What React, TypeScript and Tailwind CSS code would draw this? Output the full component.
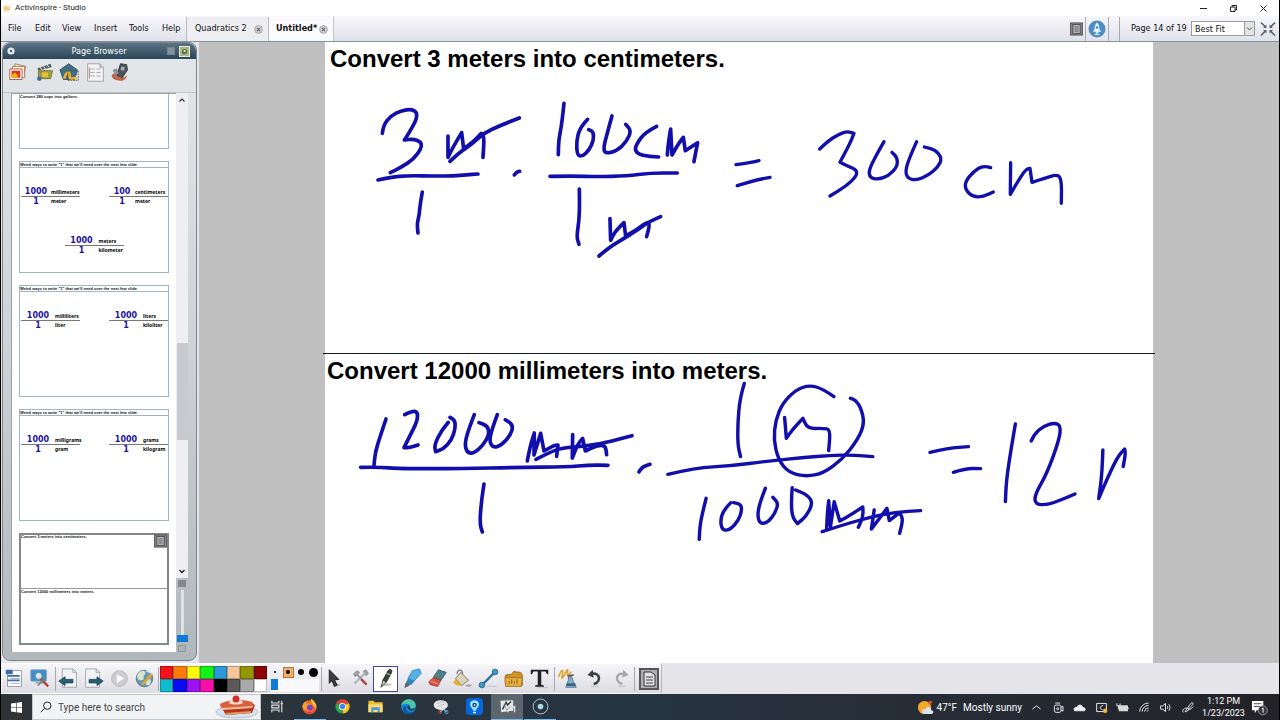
import type { ReactNode } from "react";
import clsx from "clsx";

const UI_FONT = "font-['DejaVu_Sans_Condensed','DejaVu_Sans',sans-serif]";

const MENUS = [
  { label: "File", width: "w-[27px]" },
  { label: "Edit", width: "w-[27px]" },
  { label: "View", width: "w-[32px]" },
  { label: "Insert", width: "w-[35px]" },
  { label: "Tools", width: "w-[33px]" },
  { label: "Help", width: "w-[24px]" },
];

const SWATCHES = [
  "bg-[#f3111b]", "bg-[#fb7c0a]", "bg-[#fdf80c]", "bg-[#10f516]",
  "bg-[#2a9ad8]", "bg-[#f7c79c]", "bg-[#949607]", "bg-[#8c0508]",
  "bg-[#10bccb]", "bg-[#0a0af5]", "bg-[#9c12f4]", "bg-[#f80fa9]",
  "bg-[#020202]", "bg-[#5a5a5a]", "bg-[#a8a8a8]", "bg-[#ffffff]",
];

type FractionData = { top: string; unit: string; per: string; num: string };

// num is the class that sets the width of the number column
const SLIDES: { id: string; rows: FractionData[]; extra?: FractionData }[] = [
  {
    id: "length",
    rows: [
      { top: "1000", unit: "millimeters", per: "meter", num: "w-[30px]" },
      { top: "100", unit: "centimeters", per: "meter", num: "w-[26px]" },
    ],
    extra: { top: "1000", unit: "meters", per: "kilometer", num: "w-[34px]" },
  },
  {
    id: "volume",
    rows: [
      { top: "1000", unit: "milliliters", per: "liter", num: "w-[34px]" },
      { top: "1000", unit: "liters", per: "kiloliter", num: "w-[34px]" },
    ],
  },
  {
    id: "mass",
    rows: [
      { top: "1000", unit: "milligrams", per: "gram", num: "w-[34px]" },
      { top: "1000", unit: "grams", per: "kilogram", num: "w-[34px]" },
    ],
  },
];

type Ink = { at: string; width: number; strokes: number[][] };

// Pen strokes, flat x,y lists, one group per part of the working
const INK: Ink[] = [
  {
    at: "translate(320 40) scale(.3333)",
    width: 11,
    strokes: [
      [187, 280, 190, 256, 212, 228, 245, 211, 275, 208, 291, 217, 289, 240, 268, 277, 253, 300, 280, 297, 304, 306, 304, 325, 280, 358, 245, 381, 211, 398],
      [174, 420, 215, 411, 260, 407, 345, 408, 400, 408, 440, 404, 474, 402],
      [307, 456, 300, 495, 298, 525, 291, 550, 294, 579],
      [384, 288, 384, 352, 400, 320, 425, 278, 431, 327, 460, 305, 484, 280, 493, 290, 489, 352],
      [390, 364, 420, 336, 455, 313, 490, 280, 540, 257, 598, 234],
      [583, 405, 590, 396, 599, 394],
      [732, 190, 726, 250, 716, 300, 715, 344],
      [803, 238, 780, 262, 769, 305, 772, 345, 786, 350, 808, 330, 821, 300, 820, 275, 806, 269],
      [876, 228, 863, 275, 850, 325, 857, 341, 890, 333, 920, 305, 934, 272, 917, 253],
      [1010, 259, 975, 277, 950, 312, 944, 333, 965, 347, 1016, 351],
      [1042, 345, 1045, 310, 1052, 267, 1056, 345, 1075, 312, 1090, 292, 1096, 332, 1112, 322, 1133, 308, 1122, 365],
      [690, 409, 760, 408, 830, 410, 920, 408, 990, 399, 1072, 399],
      [778, 447, 779, 490, 777, 545, 770, 590, 777, 613],
      [870, 536, 872, 601, 885, 575, 912, 548, 917, 588, 950, 570, 980, 546, 990, 552, 980, 590],
      [837, 648, 870, 620, 910, 597, 955, 568, 985, 546, 1022, 530],
    ],
  },
  {
    at: "translate(700 100) scale(.3333)",
    width: 10,
    strokes: [
      [108, 194, 145, 189, 177, 182],
      [112, 257, 160, 242, 210, 232],
      [359, 147, 382, 125, 415, 103, 442, 94, 462, 100, 450, 130, 420, 187, 447, 200, 470, 210, 470, 228, 440, 257, 390, 288],
      [552, 125, 532, 160, 506, 210, 510, 234, 535, 238, 565, 228, 592, 200, 592, 173, 576, 157],
      [650, 125, 632, 165, 616, 210, 622, 235, 650, 241, 685, 226, 715, 200, 726, 175, 706, 149, 673, 141],
      [872, 203, 850, 196, 820, 215, 796, 245, 796, 270, 820, 291, 850, 290, 880, 276],
      [932, 188, 931, 283, 950, 250, 977, 208, 990, 205, 996, 247, 1030, 236, 1075, 222, 1085, 245, 1084, 310],
    ],
  },
  {
    at: "translate(320 345) scale(.3333)",
    width: 11,
    strokes: [
      [198, 222, 182, 270, 166, 320, 162, 362],
      [254, 209, 275, 198, 293, 200, 292, 228, 270, 272, 252, 308, 270, 308, 294, 300],
      [385, 232, 365, 255, 343, 300, 347, 320, 370, 312, 395, 285, 406, 250, 405, 226, 390, 217],
      [463, 209, 445, 255, 434, 298, 442, 324, 462, 325, 490, 300, 508, 268, 503, 243, 477, 233],
      [532, 209, 515, 255, 508, 290, 520, 309, 545, 300, 572, 270, 580, 240, 556, 224],
      [622, 348, 630, 305, 643, 264, 642, 330, 662, 265, 672, 318, 705, 300, 714, 300, 710, 334],
      [758, 269, 757, 339, 772, 300, 788, 280, 796, 318, 830, 302, 856, 300, 860, 329],
      [648, 343, 690, 322, 725, 309, 800, 303, 855, 293, 936, 272],
      [122, 367, 180, 366, 235, 371, 430, 371, 590, 367, 740, 366, 810, 360, 864, 361],
      [492, 417, 485, 460, 479, 535, 487, 561],
      [957, 381, 965, 366, 990, 358],
    ],
  },
  {
    at: "translate(620 360) scale(.3444 .3333)",
    width: 10,
    strokes: [
      [361, 70, 348, 115, 342, 190, 342, 255, 350, 290],
      [478, 172, 483, 235, 500, 210, 531, 175, 545, 206, 590, 205, 611, 208, 606, 272],
      [621, 110, 590, 87, 550, 75, 510, 90, 472, 130, 452, 180, 446, 240, 460, 300, 490, 338, 540, 350, 590, 340, 645, 298, 690, 240, 710, 190, 700, 145, 684, 120, 669, 115],
      [139, 343, 220, 323, 320, 318, 430, 303, 530, 293, 610, 286, 680, 285, 734, 290],
      [250, 415, 238, 465, 232, 500, 230, 538],
      [322, 428, 300, 450, 291, 485, 298, 512, 320, 509, 345, 480, 354, 450, 350, 432, 330, 428],
      [422, 385, 405, 430, 399, 470, 408, 492, 430, 487, 450, 460, 460, 430, 444, 412],
      [500, 383, 497, 425, 500, 470, 515, 491, 540, 470, 560, 430, 545, 405, 510, 390],
      [600, 505, 602, 460, 606, 422, 611, 500, 622, 425, 638, 483, 670, 465, 705, 441, 706, 470, 692, 502],
      [738, 450, 730, 507, 775, 445, 782, 482, 812, 458, 822, 478, 812, 520],
      [587, 515, 650, 494, 725, 472, 800, 456, 873, 452],
      [900, 277, 955, 264, 1012, 260],
      [968, 337, 1005, 325, 1047, 326],
      [1148, 192, 1135, 270, 1122, 360, 1119, 425],
      [1194, 243, 1203, 222, 1230, 198, 1262, 188, 1280, 198, 1275, 240, 1240, 340, 1204, 405, 1206, 433, 1240, 435, 1280, 420, 1321, 402],
      [1402, 270, 1400, 340, 1390, 416, 1415, 355, 1445, 290, 1465, 267, 1468, 280, 1461, 320],
    ],
  },
];

// Curves through the midpoints, but sharp turns of the pen stay corners
function strokePath(p: number[]) {
  let d = `M${p[0]} ${p[1]}`;
  for (let i = 2; i < p.length - 2; i += 2) {
    const [ax, ay] = [p[i] - p[i - 2], p[i + 1] - p[i - 1]];
    const [bx, by] = [p[i + 2] - p[i], p[i + 3] - p[i + 1]];
    const mid = `${(p[i] + p[i + 2]) / 2} ${(p[i + 1] + p[i + 3]) / 2}`;
    d += ax * bx + ay * by < 0 ? `L${p[i]} ${p[i + 1]}L${mid}` : `Q${p[i]} ${p[i + 1]} ${mid}`;
  }
  return d + `L${p[p.length - 2]} ${p[p.length - 1]}`;
}

function InkLayer() {
  return (
    <svg
      className="absolute inset-0 w-full h-full pointer-events-none"
      viewBox="325 42 828 621"
      preserveAspectRatio="xMinYMin meet"
      fill="none"
      stroke="#110eab"
      strokeLinecap="round"
      strokeLinejoin="round"
    >
      {INK.map((g) => (
        <g key={g.at} transform={g.at} strokeWidth={g.width}>
          {g.strokes.map((s, i) => (
            <path key={i} d={strokePath(s)} />
          ))}
        </g>
      ))}
    </svg>
  );
}

function Sep({ className }: { className?: string }) {
  return <div className={clsx("w-px h-6 bg-[#a9a9b2]", className)} />;
}

function ToolButton({ label, children, className }: { label: string; children: ReactNode; className?: string }) {
  return (
    <button aria-label={label} className={clsx("w-[25px] h-[26px] flex items-center justify-center shrink-0", className)}>
      <svg viewBox="0 0 24 24" className="w-[21px] h-[21px]" fill="none">
        {children}
      </svg>
    </button>
  );
}

/* ---------- top bars ---------- */

function TitleBar() {
  return (
    <header className="h-4 shrink-0 flex items-center bg-white text-[#222] font-['Roboto',sans-serif]">
      <svg viewBox="0 0 10 10" className="w-[9px] h-[9px] ml-px mr-1">
        <circle cx="5" cy="5" r="4" fill="#f8e6c0" />
        <path d="M2 3l2 4 1-4 2 4 2-4" stroke="#e8b968" fill="none" />
      </svg>
      <h1 className="flex-1 text-[8px] leading-4">ActivInspire - Studio</h1>
      <div className="flex text-[#222]">
        <button aria-label="Minimize" className="w-[30px] flex justify-center">
          <svg viewBox="0 0 9 9" className="w-[9px]"><path d="M1 4.500h7" stroke="currentColor" /></svg>
        </button>
        <button aria-label="Restore" className="w-[30px] flex justify-center">
          <svg viewBox="0 0 9 9" className="w-[9px]" fill="none" stroke="currentColor">
            <path d="M1.500 3h4.500v4.500h-4.500zM3 3V1.500h4.500V6H6" />
          </svg>
        </button>
        <button aria-label="Close" className="w-[31px] flex justify-center">
          <svg viewBox="0 0 9 9" className="w-[9px]"><path d="M1.500 1.500l6 6M7.500 1.500l-6 6" stroke="currentColor" /></svg>
        </button>
      </div>
    </header>
  );
}

function TabClose({ label }: { label: string }) {
  return (
    <button aria-label={label}>
      <svg viewBox="0 0 10 10" className="w-[9px] h-[9px]">
        <circle cx="5" cy="5" r="4.300" fill="#cfcfd4" stroke="#a2a2a8" />
        <path d="M3.300 3.300l3.400 3.400M6.700 3.300l-3.400 3.400" stroke="#666" strokeWidth="1.200" />
      </svg>
    </button>
  );
}

function NotesGlyph({ className }: { className?: string }) {
  return (
    <svg viewBox="0 0 16 16" className={className}>
      <rect x=".5" y=".5" width="15" height="15" fill="#85858a" stroke="#4c4c50" />
      <rect x="3.500" y="2.500" width="9" height="11" fill="#b5b5b9" stroke="#444" />
      <path d="M5.500 5.500h5M5.500 8h5M5.500 10.500h5" stroke="#555" />
    </svg>
  );
}

function MenuBar() {
  return (
    <div className={clsx("h-[26px] shrink-0 flex border-b border-[#8593a3] bg-linear-to-b from-[#f7f7fb] to-[#e1e1ea] text-[9px] text-[#111]", UI_FONT)}>
      <nav className="flex items-center pl-[7px]">
        {MENUS.map((m) => (
          <button key={m.label} className={clsx("text-left", m.width)}>{m.label}</button>
        ))}
      </nav>
      <div className="flex pt-px">
        <div className="w-[83px] flex items-center justify-between pl-2 pr-[5px] border-x border-[#b9b9c4] bg-[#ededf2]">
          <button>Quadratics 2</button>
          <TabClose label="Close Quadratics 2" />
        </div>
        <div className="w-[65px] flex items-center justify-between pl-[7px] pr-[5px] border-r border-[#c5c5cf] bg-[#fbfbfd]">
          <button className="font-bold">Untitled*</button>
          <TabClose label="Close Untitled" />
        </div>
      </div>
      <div className="flex-1 flex items-center justify-end">
        <button aria-label="Notes"><NotesGlyph className="w-[13px] h-[14px]" /></button>
        <Sep className="ml-0.5 h-5" />
        <button aria-label="Share" className="mx-0.5">
          <svg viewBox="0 0 18 18" className="w-[18px] h-[18px]">
            <circle cx="9" cy="9" r="8.500" fill="#4c8ec4" />
            <path d="M9 2.500c2 2 2.500 4 2.300 6.500l2 3-2.500-.5-.8 2H8l-.8-2-2.500.5 2-3C6.500 6.500 7 4.500 9 2.500z" fill="#eaf4fc" />
            <circle cx="9" cy="7.500" r="1.300" fill="#4c8ec4" />
            <path d="M6.500 14.500h5" stroke="#eaf4fc" />
          </svg>
        </button>
        <Sep className="mr-2.5 h-5" />
        <Sep className="h-5" />
        <span className="w-[71px] pl-[11px] whitespace-nowrap">Page 14 of 19</span>
        <div className="relative w-16 h-[15px]">
          <select aria-label="Zoom" className="appearance-none w-full h-full pl-[3px] bg-white border border-[#9a9aa2] leading-3 block">
            <option>Best Fit</option>
          </select>
          <svg viewBox="0 0 11 15" className="absolute right-0 top-0 w-[11px] h-[15px] pointer-events-none">
            <rect x=".5" y=".5" width="10" height="14" fill="#e3e3e3" stroke="#9a9aa2" />
            <path d="M3 6.500l2.500 2.500L8 6.500" fill="none" stroke="#555" />
          </svg>
        </div>
        <button aria-label="Full screen" className="ml-[5px] mr-[3px]">
          <svg viewBox="0 0 16 16" className="w-4 h-4" stroke="#54626e" strokeWidth="1.600" fill="none">
            <path d="M1 1.500l4.500 4.500M15 1.500L10.500 6M1 14.500L5.500 10M15 14.500L10.500 10" />
            <path d="M6.500 3.500v3.500H3zM9.500 3.500v3.500H13zM6.500 12.500V9H3zM9.500 12.500V9H13z" fill="#54626e" stroke="none" />
          </svg>
        </button>
      </div>
    </div>
  );
}

/* ---------- page browser ---------- */

function Fraction({ f }: { f: FractionData }) {
  return (
    <div className="w-[59px] text-[5px] leading-[8px] text-black">
      <div className="flex items-end h-[9px] border-b border-[#777]">
        <span className={clsx("shrink-0 text-[8px] text-center text-[#1a12a5] font-['DejaVu_Sans',sans-serif]", f.num)}>{f.top}</span>
        <span>{f.unit}</span>
      </div>
      <div className="flex h-[9px]">
        <span className={clsx("shrink-0 text-[8px] leading-[9px] text-center text-[#1a12a5] font-['DejaVu_Sans',sans-serif]", f.num)}>1</span>
        <span>{f.per}</span>
      </div>
    </div>
  );
}

function PageList() {
  return (
    <div className="flex-1 min-h-0 overflow-hidden bg-white px-[7px] flex flex-col gap-3 border-t border-l border-[#8fa3b2] text-[4px] leading-[6px] font-bold text-[#111] font-['Liberation_Sans',sans-serif]">
      <article className="h-[55px] shrink-0 border border-t-0 border-[#a3b5c4]">
        Convert 280 cups into gallons.
      </article>
      {SLIDES.map((s) => (
        <article key={s.id} className="h-28 shrink-0 border border-[#a3b5c4]">
          <h3 className="h-[5px] leading-[5px] border-b border-[#a3b5c4] box-content whitespace-nowrap">
            Weird ways to write "1" that we'll need over the next few slide
          </h3>
          <div className="font-['Noto_Sans',sans-serif]">
            <div className="flex justify-between pl-px pt-5">
              {s.rows.map((f) => <Fraction key={f.unit} f={f} />)}
            </div>
            {s.extra && (
              <div className="flex justify-center pt-[31px]"><Fraction f={s.extra} /></div>
            )}
          </div>
        </article>
      ))}
      <article className="relative h-28 shrink-0 border-2 border-[#85888a] flex flex-col">
        <p className="flex-1 border-b border-[#999] -mt-px">Convert 3 meters into centimeters.</p>
        <p className="flex-1">Convert 12000 millimeters into meters.</p>
        <NotesGlyph className="absolute right-0 -top-0.5 w-[13px] h-4" />
      </article>
    </div>
  );
}

function PageBrowser() {
  return (
    <aside className="w-[195px] shrink-0 ml-px mb-0.5 flex flex-col rounded-lg border border-[#7c858b] bg-linear-to-b from-[#e4e7ea] via-[#ced1d5] to-[#b1b8bb]">
      <div className={clsx("h-4 shrink-0 flex items-center rounded-t-lg bg-linear-to-b from-[#5a7384] to-[#2c4759] text-white px-1", UI_FONT)}>
        <button aria-label="Close page browser">
          <svg viewBox="0 0 8 8" className="w-2 h-2"><circle cx="4" cy="4" r="3.600" fill="#dfe8ee" /><circle cx="4" cy="4" r="1.200" fill="#48606f" /></svg>
        </button>
        <h2 className="flex-1 text-center text-[9px] leading-4 pl-4">Page Browser</h2>
        <button aria-label="Roll up">
          <svg viewBox="0 0 8 8" className="w-2 h-2"><rect width="8" height="8" fill="#71848f" /><path d="M1 2h6M1 4h6M1 6h6" stroke="#9fb0ba" strokeWidth=".7" /></svg>
        </button>
        <button aria-label="Pin" className="ml-1 mr-0.5">
          <svg viewBox="0 0 11 11" className="w-[11px] h-[11px]"><rect x=".5" y=".5" width="10" height="10" fill="#a9b68a" stroke="#e6ecd8" /><circle cx="5.500" cy="5.500" r="2.600" fill="#5c6b42" /><circle cx="5.500" cy="5" r="1" fill="#fff" /></svg>
        </button>
      </div>

      <div className="h-[34px] shrink-0 px-[3px] border-b border-[#c1c4c9]">
        <div className="flex w-[127px] justify-between">
          <ToolButton label="Pages">
            <path d="M8 2l12 3-2 12-11-3z" fill="#faf5ec" stroke="#9a7650" />
            <path d="M5 5h14v13H5z" fill="#f7eedd" stroke="#a8744c" />
            <path d="M2 8h14v12H2z" fill="#fff" stroke="#b04a2e" />
            <path d="M4 10h10v8H4z" fill="#d9361c" /><path d="M4 15l4-3 3 3v3H4z" fill="#f7b21c" />
          </ToolButton>
          <ToolButton label="Resources">
            <path d="M4 7l15-5 1 4-15 4z" fill="#575e61" /><path d="M7 6l2 3M11 5l2 3M15 3l2 3" stroke="#fff" />
            <path d="M5 10h16l-2 9H5z" fill="#9ea63a" stroke="#6e7526" />
            <path d="M7 12h9v5H7z" fill="#efbd34" /><circle cx="6" cy="19" r="2.500" fill="#3b68a0" /><path d="M8 19V11" stroke="#3b68a0" />
          </ToolButton>
          <ToolButton label="Objects">
            <path d="M11 2l10 7-3 11H5L1 9z" fill="#3f6f80" stroke="#2c5463" />
            <path d="M6 19c2-8 6-9 6-4s2 4 8 3" stroke="#f0b32a" strokeWidth="3" />
            <path d="M10 10h12v11H10z" stroke="#555" strokeDasharray="2 1" />
          </ToolButton>
          <ToolButton label="Notes">
            <path d="M3 2h14l4 4v16H3z" fill="#f2f3f5" stroke="#9b9ea3" /><path d="M17 2v4h4" fill="#ccc" stroke="#9b9ea3" />
            <path d="M6 8h5M6 12h5M6 16h5M13 8h5M13 12h5M13 16h5" stroke="#a5a5aa" /><path d="M5 6v13" stroke="#c56a6a" />
          </ToolButton>
          <ToolButton label="Voting">
            <path d="M2 15c2-3 6-2 8 1s7 2 10-1c-2 6-6 7-10 6s-8-1-8-6z" fill="#b9694a" />
            <path d="M12 2l7 1 1 6-6 9-6-3z" fill="#4d5358" stroke="#2b2f32" /><path d="M13 5l4 1-1 4-4-1z" fill="#9fb2bc" />
            <path d="M3 9l5-2 2 6-4 2z" fill="#8a9094" />
          </ToolButton>
        </div>
      </div>

      <div className="flex-1 min-h-0 flex px-2 pb-2">
        <PageList />
        <div className="w-3 shrink-0 flex flex-col items-center">
          <div className="flex-1 min-h-0 w-full flex flex-col items-center bg-[#efeff3] py-[3px]">
            <svg viewBox="0 0 8 8" className="w-2 h-2 shrink-0"><path d="M1.500 5.500L4 3l2.500 2.500" stroke="#333" strokeWidth="1.200" fill="none" /></svg>
            <div className="w-full basis-[239px] shrink" />
            <div className="w-[11px] h-[97px] bg-[#c8cacf]" />
            <div className="flex-1" />
            <svg viewBox="0 0 8 8" className="w-2 h-2 shrink-0"><path d="M1.500 3L4 5.500 6.500 3" stroke="#222" strokeWidth="1.400" fill="none" /></svg>
          </div>
          <div className="h-[74px] flex flex-col items-center justify-between pt-0.5">
            <div className="w-2 h-[7px] bg-[#85898b]" />
            <input
              type="range"
              aria-label="Thumbnail size"
              defaultValue={0}
              className="appearance-none w-[11px] h-[52px] [writing-mode:vertical-lr] [direction:rtl] bg-[linear-gradient(90deg,transparent_4px,#dfe2e5_4px,#dfe2e5_7px,transparent_7px)] [&::-webkit-slider-thumb]:appearance-none [&::-webkit-slider-thumb]:w-[11px] [&::-webkit-slider-thumb]:h-[7px] [&::-webkit-slider-thumb]:bg-[#0f78d6]"
            />
            <div className="w-2 h-[7px] border border-[#92979a] bg-[#adb2b5]" />
          </div>
        </div>
      </div>
    </aside>
  );
}

/* ---------- flipchart page ---------- */

function Flipchart() {
  return (
    <main className="flex-1 min-w-0 flex bg-[#c0c0c0] ml-0.5 px-[126px]">
      <div className="relative flex-1 grid grid-rows-2 bg-white text-black font-bold text-[24px] leading-[26px] font-['Liberation_Sans',Arial,sans-serif]">
        <section className="pl-[5px] pt-1">
          <h2>Convert 3 meters into centimeters.</h2>
        </section>
        <section className="-mx-0.5 pl-1 pt-1 border-t border-[#15181c]">
          <h2>Convert 12000 millimeters into meters.</h2>
        </section>
        <InkLayer />
      </div>
    </main>
  );
}

/* ---------- drawing tools ---------- */

function Toolbox() {
  return (
    <div className="h-[31px] shrink-0 bg-[#e4e4e9] flex">
      <div className="flex items-center border border-white border-r-[#b5b5bb] bg-linear-to-b from-[#f7f7fa] to-[#dcdce3] pr-0.5">
        <ToolButton label="Main menu">
          <rect x="4" y="3" width="16" height="18" fill="#fff" stroke="#8b98a8" />
          <rect x="2" y="2" width="8" height="5" rx="1" fill="#3e69ac" />
          <path d="M4 9h14M4 14h14" stroke="#3e69ac" strokeWidth="2" /><path d="M7 12h11M7 17.500h11" stroke="#a0aab8" />
        </ToolButton>
        <ToolButton label="Annotate desktop">
          <rect x="2" y="2" width="18" height="13" rx="1" fill="#3f8bd0" stroke="#8ba8c4" />
          <path d="M6 18l3-3h6l3 3z" fill="#aab3bb" />
          <path d="M12 11l10 10" stroke="#b23a31" strokeWidth="2.500" /><circle cx="11" cy="9" r="4" fill="#d7e8f5" stroke="#587" />
          <path d="M10 20l9-9" stroke="#7a8288" strokeWidth="2" />
        </ToolButton>
        <Sep className="ml-[3px]" />
        <div className="flex w-[101px] justify-between">
          <ToolButton label="Previous page">
            <path d="M5 1h12l4 4v17H5z" fill="#f2f3f5" stroke="#9ca0a6" /><path d="M17 1v4h4" stroke="#9ca0a6" />
            <path d="M1 15l7-5v3h9v4H8v3z" fill="#2b6072" stroke="#1b4655" />
          </ToolButton>
          <ToolButton label="Next page">
            <path d="M3 1h12l4 4v17H3z" fill="#f2f3f5" stroke="#9ca0a6" /><path d="M15 1v4h4" stroke="#9ca0a6" />
            <path d="M23 15l-7-5v3H7v4h9v3z" fill="#2b6072" stroke="#1b4655" />
          </ToolButton>
          <ToolButton label="Start">
            <circle cx="12" cy="12" r="9" fill="#cdcdd1" stroke="#b3b3b8" /><path d="M9 7l8 5-8 5z" fill="#fff" />
          </ToolButton>
          <ToolButton label="Web browser">
            <circle cx="12" cy="12" r="9.500" fill="#6796b3" stroke="#587789" />
            <path d="M5 6c4-4 7-3 8-1s-3 3-2 6-4 4-6 2-2-5 0-7zM14 13c4-2 6 0 5 4s-5 3-6 0 0-3 1-4z" fill="#d8e4d0" />
            <path d="M8 18L19 6l3 2-12 12z" fill="#d5a53e" /><path d="M14 3l7 3" stroke="#d7e6f0" strokeWidth="2" />
          </ToolButton>
        </div>
        <Sep className="mx-px" />
        <div className="grid grid-cols-8 w-[107px]">
          {SWATCHES.map((c, i) => (
            <button key={c} aria-label={`Colour ${i + 1}`} className={clsx("h-[13px] border border-black/25", c)} />
          ))}
        </div>
        <div className="w-12 ml-1 flex flex-col">
          <div className="flex items-center justify-between h-[14px]">
            <button aria-label="Pen width 1" className="w-2 flex justify-center"><i className="size-0.5 rounded-full bg-black" /></button>
            <button aria-label="Pen width 2" className="size-[11px] flex items-center justify-center bg-[#f0ae6b] border border-[#b3783e]"><i className="size-1 rounded-full bg-black" /></button>
            <button aria-label="Pen width 3" className="w-2 flex justify-center"><i className="size-[6px] rounded-full bg-black" /></button>
            <button aria-label="Pen width 4" className="w-2.5 flex justify-center"><i className="size-[9px] rounded-full bg-black" /></button>
          </div>
          <div className="h-[13px] bg-[#f8f8fb]"><div className="w-[7px] h-[11px] bg-[#0d7cd2]" /></div>
        </div>
        <Sep className="ml-0.5" />
        <div className="flex w-[230px] justify-between">
          <ToolButton label="Select">
            <path d="M9 20c4-2 8-2 10-1-2 2-7 3-10 1z" fill="#b5b5bb" />
            <path d="M6 2l11 11-5 .5 3 6-3 1.500-3-6.500-3 3z" fill="#3c3c42" stroke="#16161a" />
          </ToolButton>
          <ToolButton label="Tools">
            <path d="M5 18L18 5" stroke="#b9bbc0" strokeWidth="3" /><path d="M6 5l12 13" stroke="#8c9095" strokeWidth="2" />
            <path d="M13 13l6 6" stroke="#b23c36" strokeWidth="2.500" /><path d="M4 7l4-4 3 2-5 5zM15 4l3-2 3 4-3 3" fill="#9ea2a8" stroke="#85888d" />
          </ToolButton>
          <ToolButton label="Pen" className="border border-[#4747a0] bg-white">
            <path d="M6 21c5-2 10-1 13-2-4-1-8-1-11 0z" fill="#bbb" stroke="#bbb" />
            <path d="M15 3c2-3 5-1 4 2l-6 11-4-2z" fill="#2c4a3c" stroke="#121a16" /><path d="M13 6l5 2" stroke="#c8b56a" strokeWidth="1.500" />
            <path d="M9 14l4 2-6 6z" fill="#d7cfa5" stroke="#333" />
          </ToolButton>
          <ToolButton label="Highlighter">
            <path d="M13 3l8-2 2 5-8 9-7-3z" fill="#54b2e4" stroke="#2f86ba" /><path d="M8 12l7 3-3 4-7-1z" fill="#3183b8" /><path d="M5 17l6 2-7 4z" fill="#55646e" />
          </ToolButton>
          <ToolButton label="Eraser">
            <path d="M13 2l9 3-6 9-9-3z" fill="#4f7f89" stroke="#355d66" /><path d="M7 11l9 3-4 7-8-2-2-3z" fill="#d95445" stroke="#a03328" /><path d="M4 15l8 3" stroke="#eba397" />
          </ToolButton>
          <ToolButton label="Fill">
            <path d="M6 7c0-6 6-6 6 0v3" stroke="#777" strokeWidth="1.500" /><path d="M10 5l9 9-8 6-7-8z" fill="#d8d3bd" stroke="#77715a" />
            <path d="M4 12l7 8c-3 1-8-1-10-4 2 0 2-2 3-4z" fill="#e8ad25" /><path d="M15 20c3-2 6-2 8 0-2 2-6 2-8 0z" fill="#aaa" />
          </ToolButton>
          <ToolButton label="Connector">
            <path d="M5 19L19 5" stroke="#2c6f97" strokeWidth="2.500" /><circle cx="19.500" cy="4.500" r="3.200" fill="#3d9dcc" stroke="#246283" /><circle cx="4.500" cy="19.500" r="3.200" fill="#3d9dcc" stroke="#246283" />
            <path d="M9 21h12" stroke="#bbb" />
          </ToolButton>
          <ToolButton label="Media">
            <path d="M3 8l7-1 2-3 8 1 2 3v12H3z" fill="#cf9326" stroke="#94640f" /><path d="M2 11h20l-1 10H3z" fill="#e3ae42" stroke="#a6751c" />
            <path d="M7 15v3M10 13v5M13 15v3M16 13v5" stroke="#8a5d10" />
          </ToolButton>
          <ToolButton label="Text">
            <path d="M2 2h20v5h-1.500L19 4h-5v15l3 1v1.500H7V20l3-1V4H5L3.500 7H2z" fill="#222226" />
            <path d="M10 22.500h12" stroke="#bbb" />
          </ToolButton>
        </div>
        <Sep className="ml-0.5" />
        <div className="flex w-[79px] justify-between">
          <ToolButton label="Clear">
            <path d="M2 10c3-9 6-9 4-2s2 2 4-3 3-3 2 1 2 2 4-2" stroke="#e0a42d" strokeWidth="1.800" />
            <path d="M13 10h4l1 4 4 8H10l3-8z" fill="#8cacc4" stroke="#4d7391" /><path d="M11 19h10" stroke="#345f80" strokeWidth="3" /><path d="M12 9l7-1" stroke="#555" strokeWidth="2" />
          </ToolButton>
          <ToolButton label="Undo">
            <path d="M8 7c5-2 10 1 9 6-1 3-3 5-6 5" stroke="#3b4046" strokeWidth="2.800" /><path d="M10 2L4 8l7 3z" fill="#3b4046" /><path d="M8 21h9" stroke="#ccc" strokeWidth="2" />
          </ToolButton>
          <ToolButton label="Redo">
            <path d="M16 7c-5-2-10 1-9 6 1 3 3 5 6 5" stroke="#a5a7ac" strokeWidth="2.600" /><path d="M14 2l6 6-7 3z" fill="#a5a7ac" /><path d="M8 21h9" stroke="#ccc" strokeWidth="2" />
          </ToolButton>
        </div>
        <Sep className="mr-1" />
        <button aria-label="Page notes">
          <svg viewBox="0 0 20 22" className="w-5 h-[22px]">
            <rect x="1" y="1" width="18" height="20" fill="#b0b0b4" stroke="#55555a" strokeWidth="2" />
            <path d="M5 4h7l4 3v11H5z" fill="#e2e2e4" stroke="#333" /><path d="M7 9h7M7 12h7M7 15h7" stroke="#444" />
          </svg>
        </button>
      </div>
    </div>
  );
}

/* ---------- windows taskbar ---------- */

function TaskButton({ label, open, active, children }: { label: string; open?: boolean; active?: boolean; children: ReactNode }) {
  return (
    <button
      aria-label={label}
      className={clsx(
        "w-8 h-full flex items-center justify-center border-b",
        open ? "border-[#76b9ed]" : "border-transparent",
        active && "bg-[#5b666f]",
      )}
    >
      <svg viewBox="0 0 24 24" className="w-[17px] h-[17px]" fill="none">{children}</svg>
    </button>
  );
}

function TrayButton({ label, children }: { label: string; children: ReactNode }) {
  return (
    <button aria-label={label}>
      <svg viewBox="0 0 16 16" className="w-[13px] h-[13px]" fill="none" stroke="#e8e8ea" strokeWidth="1.200">{children}</svg>
    </button>
  );
}

function Taskbar() {
  return (
    <footer className="h-[26px] shrink-0 flex bg-linear-to-r from-[#2d3336] via-[#273542] via-50% to-[#232228] text-white text-[10px] font-['Roboto',sans-serif]">
      <button aria-label="Start" className="w-[31px] flex items-center justify-center">
        <svg viewBox="0 0 12 12" className="w-[11px] h-[11px]" fill="#fff"><path d="M0 1.700l5.500-.8v4.800H0zM6.200.8L12 0v5.700H6.200zM0 6.400h5.500v4.800L0 10.400zM6.200 6.400H12V12l-5.800-.8z" /></svg>
      </button>
      <label className="w-[229px] flex items-center bg-[#f2f3f4] border border-[#c4c6c8] pl-[7px]">
        <svg viewBox="0 0 12 12" className="w-3 h-3 mr-1.5 shrink-0" fill="none" stroke="#222"><circle cx="7.300" cy="4.700" r="3.700" /><path d="M4.500 7.500L.8 11.200" /></svg>
        <input aria-label="Search" placeholder="Type here to search" className="flex-1 min-w-0 bg-transparent outline-none placeholder:text-[#444]" />
        <svg viewBox="0 0 46 24" className="w-[46px] h-6 shrink-0">
          <ellipse cx="23" cy="17" rx="21" ry="6" fill="#d5e2ef" stroke="#b2c4d6" />
          <path d="M6 10l30-3 5 3-3 8-26 2z" fill="#b8321f" /><path d="M6 9c8-5 24-5 32-2l3 4-33 2z" fill="#d9603f" />
          <path d="M7 13l32-2-1 2-30 2z" fill="#f3c29c" /><path d="M11 18l26-2v2l-24 2z" fill="#dc9a5e" />
          <path d="M15 8c0-5 13-5 14 0-4 2-10 2-14 0z" fill="#fbd9cb" /><circle cx="22" cy="4" r="3.500" fill="#cf2f2c" />
        </svg>
      </label>
      <div className="flex w-[295px] justify-between">
        <TaskButton label="Task view">
          <path d="M4 4v3h10V4M4 20v-3h10v3M4 10h10v4H4zM18 4v16M16.500 8h3" stroke="#e3e3e3" strokeWidth="1.600" />
        </TaskButton>
        <TaskButton label="Firefox" open>
          <circle cx="12" cy="13" r="10" fill="#f5652a" /><path d="M14 1c5 3 9 8 7 14-3-6-7-5-7-14z" fill="#fdc72e" />
          <path d="M2 12c1-5 3-6 5-7l1 3c4-1 8 1 8 4s-4 3-5 6c-4 0-8-1-9-6z" fill="#f9a029" /><circle cx="12.500" cy="13.500" r="4.200" fill="#7b43c8" />
          <path d="M3 16c3 7 14 9 18 0-4 5-12 6-18 0z" fill="#e62f5b" />
        </TaskButton>
        <TaskButton label="Chrome">
          <path d="M12 12L3.300 7A10 10 0 0 1 20.700 7z" fill="#e5402f" /><path d="M12 12l8.700-5A10 10 0 0 1 12 22z" fill="#fbc51d" />
          <path d="M12 12v10A10 10 0 0 1 3.300 7z" fill="#2ea44f" /><circle cx="12" cy="12" r="5" fill="#fff" /><circle cx="12" cy="12" r="3.800" fill="#4284ef" />
        </TaskButton>
        <TaskButton label="File Explorer">
          <path d="M2 4h7l2 2h11v14H2z" fill="#f4b92e" /><path d="M2 9h20v11H2z" fill="#fbdc74" /><path d="M6 20v-7h12v7h-3v-3H9v3z" fill="#4b9bd6" />
        </TaskButton>
        <TaskButton label="Edge">
          <circle cx="12" cy="12" r="10.500" fill="#1684d0" /><path d="M2 10C4 0 20-1 22 9c1 5-4 7-8 5 3-5-5-8-12-4z" fill="#4bc8a0" />
          <path d="M9 11c-2 4 1 9 6 9 3 0 5-1 6-2-4 7-13 6-16 1-2-4 1-8 4-8z" fill="#0d569f" /><path d="M10 12c1-2 4-1 4 2 2 2 6 1 7 0-1 4-9 6-11-2z" fill="#283740" />
        </TaskButton>
        <TaskButton label="Snipping Tool">
          <ellipse cx="11" cy="10" rx="10" ry="7" fill="#e8e8ea" /><path d="M5 8l10-3M6 12l12-4" stroke="#a9adb4" /><path d="M10 10l9 10M18 12l-8 8" stroke="#d5dade" strokeWidth="1.500" />
          <circle cx="19" cy="20" r="2.200" stroke="#3b9bd2" strokeWidth="1.500" /><circle cx="10" cy="20" r="2" stroke="#c54b42" strokeWidth="1.300" />
        </TaskButton>
        <TaskButton label="Classroom">
          <rect width="24" height="24" rx="5" fill="#0567dc" /><path d="M12 3c5 0 7 4 6 8-1 3-4 4-4 7h-4c0-3-3-4-4-7-1-4 1-8 6-8z" fill="#a8e5ff" />
          <circle cx="12" cy="10" r="3.200" fill="#07489e" /><circle cx="12" cy="10" r="1.200" fill="#fff" /><path d="M10 20.500h4" stroke="#fff" strokeWidth="2" />
        </TaskButton>
        <TaskButton label="ActivInspire" open active>
          <path d="M2 4l18-1v15L3 20z" fill="#e5e7e6" /><path d="M5 16l5-10 2 4 5-5" stroke="#343a3d" strokeWidth="2" /><path d="M12 20l4-9 3 3 3-2v8" stroke="#d9e0dc" strokeWidth="2" /><path d="M7 9l4 8 5-5" stroke="#788085" />
        </TaskButton>
        <TaskButton label="Recorder" open>
          <circle cx="12" cy="12" r="10.500" stroke="#a9c3d1" strokeWidth="1.400" /><circle cx="12" cy="12" r="4" fill="#a8d4e6" />
        </TaskButton>
      </div>
      <div className="flex-1" />
      <button className="flex items-center whitespace-nowrap">
        <svg viewBox="0 0 18 18" className="w-[17px] h-[17px] mr-[3px]">
          <circle cx="8" cy="9" r="7" fill="#f5a82a" /><circle cx="14" cy="3.500" r="2" fill="#ce4a28" /><path d="M6 15c-2-3 1-5 3-4 1-4 7-3 6 1 3 0 3 4 0 4H8z" fill="#dbe5f2" />
        </svg>
        <span className="mr-1.5">47°F</span>
        <span>Mostly sunny</span>
      </button>
      <div className="flex items-center justify-between w-[164px] ml-2">
        <TrayButton label="Show hidden icons"><path d="M3 10l5-4 5 4" /></TrayButton>
        <TrayButton label="Meet Now"><rect x="3" y="5" width="8" height="9" rx="2" /><path d="M4 2.500h6M11 8l2.500-1.500v6L11 11" /><circle cx="7" cy="9.500" r="1.300" /></TrayButton>
        <TrayButton label="OneDrive"><path d="M2 12c-2-3 1-5 3-4 1-4 6-4 7 0 3 0 4 3 2 4z" fill="#f1f1f3" /></TrayButton>
        <TrayButton label="Display"><path d="M2 3h12v10H2zM10 5L6 8l3 3" /><circle cx="12.500" cy="12" r="2.800" fill="#f0b43a" stroke="none" /></TrayButton>
        <TrayButton label="Battery"><rect x="4" y="6" width="10" height="6" fill="#d9d9db" /><path d="M1 3v3h4V3M3 6v4M15 8v2" /></TrayButton>
        <TrayButton label="Wi-Fi"><path d="M2 13A11 11 0 0 1 13 2.500M5 13a8 8 0 0 1 8-7.500M8 13a5 5 0 0 1 5-4.500M11 13a2 2 0 0 1 2-1.500" /></TrayButton>
        <TrayButton label="Volume"><path d="M2 6h2.500L8 3v10l-3.500-3H2zM10 6c1 1 1 3 0 4M12 4c2 2 2 6 0 8" /></TrayButton>
        <TrayButton label="Pen"><path d="M3 14c-3-3 2-6 5-5s0 5-3 4l7-10c2-2 4 0 2 2l-5 5c3 1 5-2 6-3" /></TrayButton>
      </div>
      <button className="w-[55px] ml-0.5 text-[9px] leading-[12px] text-center">
        <div>1:12 PM</div>
        <div>1/23/2023</div>
      </button>
      <button aria-label="Notifications" className="w-7 flex items-center">
        <svg viewBox="0 0 18 18" className="w-[17px] h-[17px]">
          <path d="M1 2h12v10H6l-2 3v-3H1z" fill="#fff" /><path d="M3 5h8M3 8h8" stroke="#444" />
          <circle cx="12.500" cy="12" r="4.800" fill="#3a393e" stroke="#aaa" strokeWidth=".8" /><path d="M11.500 10.500l1.300-1v5" stroke="#fff" fill="none" />
        </svg>
      </button>
    </footer>
  );
}

export default function App() {
  return (
    <div className="h-screen w-full flex flex-col overflow-hidden border-x border-black bg-[#e4e4e9]">
      <TitleBar />
      <MenuBar />
      <div className="flex-1 min-h-0 flex">
        <PageBrowser />
        <Flipchart />
      </div>
      <Toolbox />
      <Taskbar />
    </div>
  );
}
